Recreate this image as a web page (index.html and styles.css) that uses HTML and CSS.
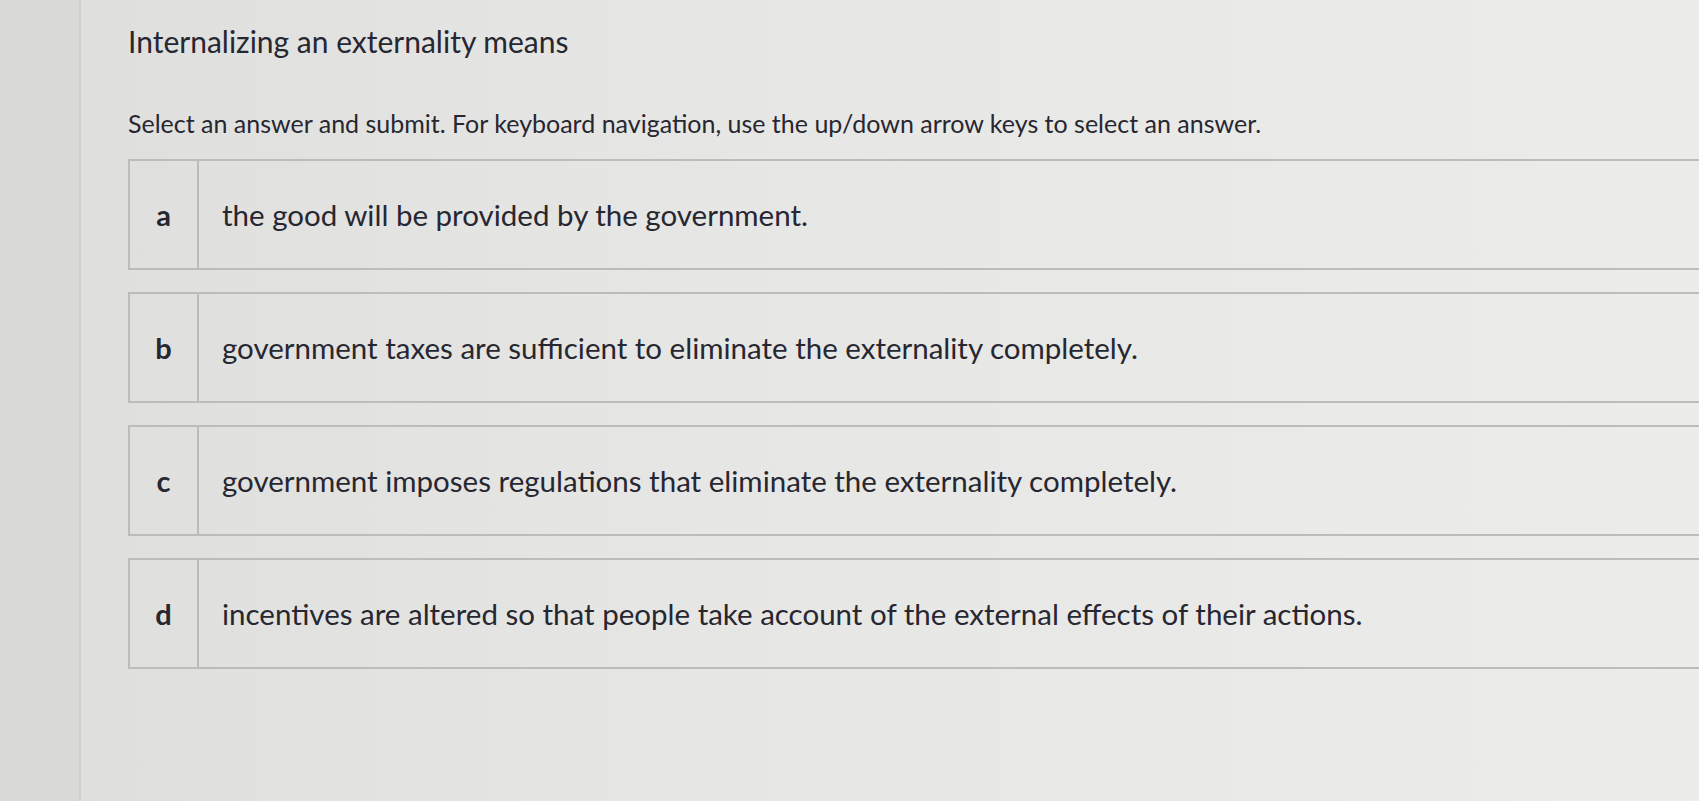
FILE: index.html
```html
<!DOCTYPE html>
<html lang="en">
<head>
    <meta charset="UTF-8">
    <meta name="viewport" content="width=device-width, initial-scale=1.0">
    <title>Internalizing an externality</title>
    <link rel="stylesheet" href="styles.css">
</head>
<body>
    <div class="page">
        <aside class="side"></aside>

        <main class="question">
            <h1>Internalizing an externality means</h1>
            <p class="hint">Select an answer and submit. For keyboard navigation, use the up/down arrow keys to select an answer.</p>

            <div class="choices" role="radiogroup">
                <div class="choice" role="radio" tabindex="0">
                    <span class="letter">a</span>
                    <span class="answer">the good will be provided by the government.</span>
                </div>
                <div class="choice" role="radio" tabindex="-1">
                    <span class="letter">b</span>
                    <span class="answer">government taxes are sufficient to eliminate the externality completely.</span>
                </div>
                <div class="choice" role="radio" tabindex="-1">
                    <span class="letter">c</span>
                    <span class="answer">government imposes regulations that eliminate the externality completely.</span>
                </div>
                <div class="choice" role="radio" tabindex="-1">
                    <span class="letter">d</span>
                    <span class="answer">incentives are altered so that people take account of the external effects of their actions.</span>
                </div>
            </div>
        </main>
    </div>
</body>
</html>
```

FILE: styles.css
```css
* {
    margin: 0;
    padding: 0;
    box-sizing: border-box;
}

html, body {
    height: 100%;
    overflow: hidden;
}

body {
    font-family: Lato, "Open Sans", sans-serif;
    color: #272731;
    background: linear-gradient(90deg, #dedfdd 0%, #e6e6e4 40%, #ececeb 100%);
}

.page {
    display: flex;
    min-height: 100%;
}

.side {
    width: 81px;
    flex-shrink: 0;
    background-color: #d9dad8;
    border-right: 2px solid #cfd0ce;
}

.question {
    flex: 1;
    padding: 22px 0 0 47px;
    margin-right: -12px;
}

h1 {
    font-size: 30px;
    font-weight: 400;
    line-height: 38px;
    margin-bottom: 48px;
}

.hint {
    font-size: 25px;
    line-height: 30px;
    margin-bottom: 21px;
}

.choices {
    display: flex;
    flex-direction: column;
    gap: 22px;
}

.choice {
    display: flex;
    align-items: center;
    height: 111px;
    border: 2px solid #bcbcbb;
    cursor: pointer;
}

.letter {
    width: 69px;
    height: 100%;
    flex-shrink: 0;
    display: flex;
    align-items: center;
    justify-content: center;
    border-right: 2px solid #bcbcbb;
    font-size: 29px;
    font-weight: 700;
}

.answer {
    font-size: 29.5px;
    padding-left: 23px;
}
```
